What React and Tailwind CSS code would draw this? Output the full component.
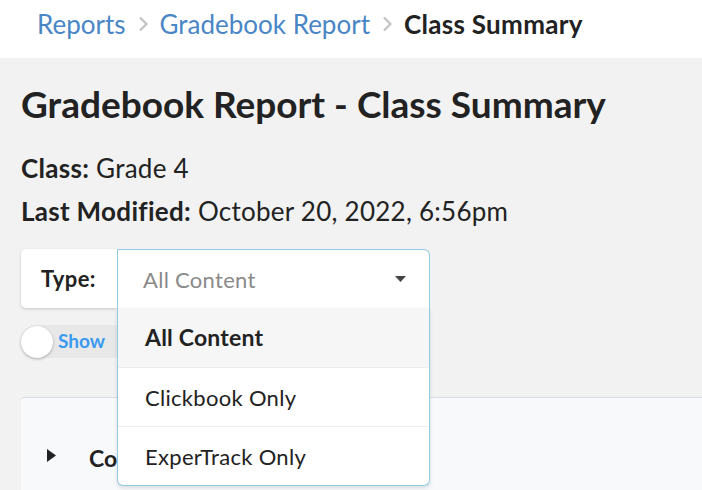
const font = { fontFamily: 'Lato, "Noto Sans", sans-serif' };

const OPTIONS = ['All Content', 'Clickbook Only', 'ExperTrack Only'];

function Chevron() {
  return (
    <svg width="10" height="16" viewBox="0 0 10 16" className="shrink-0">
      <path d="M2 1.5l6.5 6.5L2 14.5" fill="none" stroke="#c2c2c2" strokeWidth="2.2" />
    </svg>
  );
}

function Breadcrumbs() {
  return (
    <nav className="h-[58px] bg-white flex items-center gap-[12px] px-[37px] pb-[10px] text-[26px]">
      <a className="text-[#4a86c5]">Reports</a>
      <Chevron />
      <a className="text-[#4a86c5]">Gradebook Report</a>
      <Chevron />
      <span className="font-bold text-[#222] tracking-[0.3px]">Class Summary</span>
    </nav>
  );
}

function TypeSelect() {
  return (
    <div className="relative flex h-[59px] w-[409px]">
      <div className="w-[96px] bg-white rounded-l-[5px] shadow-[0_1px_3px_rgba(0,0,0,0.18)] flex items-center pl-[20px] text-[22px] tracking-[0.4px] font-bold text-[#222]">
        Type:
      </div>
      <div className="relative flex-1 bg-white border border-[#93cbe2] border-b-0 rounded-tr-[6px] flex items-center justify-between pl-[25px] pr-[23px] text-[22px] tracking-[0.3px] text-[#8a8a8a]">
        <span>All Content</span>
        <svg width="11" height="6" viewBox="0 0 11 6"><path d="M0 0h11L5.5 6z" fill="#444" /></svg>
        <ul className="absolute left-[-1px] right-[-1px] top-[58px] z-10 bg-white border border-[#93cbe2] border-t-0 rounded-b-[6px] shadow-[0_2px_4px_rgba(0,0,0,0.12)] overflow-hidden">
          {OPTIONS.map((o, i) => (
            <li
              key={o}
              className={`h-[59px] flex items-center pl-[27px] text-[#222] ${i === 0 ? 'bg-[#f6f6f6] font-bold text-[23px] tracking-[0.2px]' : 'border-t border-[#ededed] text-[22px] tracking-[0.3px]'}`}
            >
              {o}
            </li>
          ))}
        </ul>
      </div>
    </div>
  );
}

export default function App() {
  return (
    <div style={font} className="w-[702px] h-[490px] overflow-hidden bg-[#f2f2f2]">
      <Breadcrumbs />
      <main className="pl-[21px] pt-[24px]">
        <h1 className="text-[37px] font-bold text-[#222] leading-[44px]">Gradebook Report - Class Summary</h1>
        <div className="mt-[27px] text-[26px] tracking-[0.25px] text-[#222] leading-[30px]">
          <p><span className="font-bold tracking-[0.3px]">Class:</span> Grade 4</p>
          <p className="mt-[13px]"><span className="font-bold tracking-[0.3px]">Last Modified:</span> October 20, 2022, 6:56pm</p>
        </div>
        <div className="mt-[23px]">
          <TypeSelect />
        </div>
        <div className="mt-[17px] flex items-center w-[130px] h-[33px] rounded-full bg-[#e8e8e8]">
          <span className="w-[32px] h-[32px] rounded-full bg-white shadow-[0_1px_3px_rgba(0,0,0,0.3)]" />
          <span className="ml-[5px] text-[19px] font-bold text-[#3a9af0]">Show</span>
        </div>
        <section className="mt-[39px] h-[120px] bg-[#f8f9fb] border-t border-[#d9dce0] rounded-tl-[4px] flex items-start pl-[26px] pt-[43px]">
          <svg width="9" height="13" viewBox="0 0 9 13" className="mt-[8px]"><path d="M0 0l9 6.5L0 13z" fill="#222" /></svg>
          <span className="ml-[33px] text-[23px] font-bold text-[#222]">Content Overview</span>
        </section>
      </main>
    </div>
  );
}
